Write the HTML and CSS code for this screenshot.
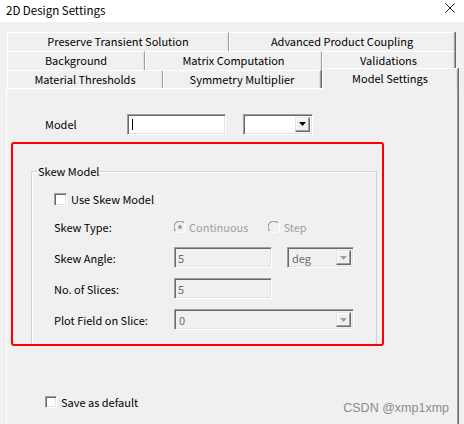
FILE: index.html
```html
<!DOCTYPE html>
<html>
<head>
<meta charset="utf-8">
<link rel="stylesheet" href="styles.css">
</head>
<body>
<div class="titlebar">
  <span class="title">2D Design Settings</span>
  <svg class="close" width="10" height="10" viewBox="0 0 10 10"><path d="M0.5 0.5 L9.5 9.5 M9.5 0.5 L0.5 9.5" stroke="#1a1a1a" stroke-width="1" fill="none"/></svg>
</div>
<div class="dialog">
  <div class="tabs">
    <div class="tabrow">
      <div class="tab w-preserve">Preserve Transient Solution</div>
      <div class="tab w-advanced">Advanced Product Coupling</div>
    </div>
    <div class="tabrow">
      <div class="tab w-background">Background</div>
      <div class="tab w-matrix">Matrix Computation</div>
      <div class="tab w-valid">Validations</div>
    </div>
    <div class="tabrow">
      <div class="tab w-material">Material Thresholds</div>
      <div class="tab w-symmetry">Symmetry Multiplier</div>
      <div class="tab tab-active">Model Settings</div>
    </div>
  </div>
  <div class="panel">
    <div class="model-row">
      <span class="model-label">Model</span>
      <div class="edit edit-model"><span class="caret"></span></div>
      <div class="combo combo-model">
        <span class="combo-text"></span>
        <span class="combo-btn"><svg width="7" height="4" viewBox="0 0 7 4"><path d="M0 0 H7 L3.5 4 Z" fill="#000"/></svg></span>
      </div>
    </div>
    <div class="redbox">
      <div class="group">
        <span class="legend">Skew Model</span>
        <div class="check-row">
          <span class="checkbox"></span>
          <span class="check-label">Use Skew Model</span>
        </div>
        <div class="frow">
          <span class="flabel">Skew Type:</span>
          <span class="radio">
            <svg width="12" height="12" viewBox="0 0 12 12"><path d="M10.2 1.8 A5.5 5.5 0 0 0 1.8 10.2" stroke="#a0a0a0" stroke-width="1.2" fill="none"/><path d="M1.8 10.2 A5.5 5.5 0 0 0 10.2 1.8" stroke="#ffffff" stroke-width="1.2" fill="none"/><circle cx="6" cy="6" r="2" fill="#a0a0a0"/></svg>
            <span class="dis">Continuous</span>
          </span>
          <span class="radio radio-step">
            <svg width="12" height="12" viewBox="0 0 12 12"><path d="M10.2 1.8 A5.5 5.5 0 0 0 1.8 10.2" stroke="#a0a0a0" stroke-width="1.2" fill="none"/><path d="M1.8 10.2 A5.5 5.5 0 0 0 10.2 1.8" stroke="#ffffff" stroke-width="1.2" fill="none"/></svg>
            <span class="dis">Step</span>
          </span>
        </div>
        <div class="frow">
          <span class="flabel">Skew Angle:</span>
          <div class="edit edit-dis w-edit"><span class="dis-val">5</span></div>
          <div class="combo combo-dis combo-deg">
            <span class="combo-text dis-val">deg</span>
            <span class="combo-btn"><svg width="7" height="4" viewBox="0 0 7 4"><path d="M0 0 H7 L3.5 4 Z" fill="#a0a0a0"/></svg></span>
          </div>
        </div>
        <div class="frow">
          <span class="flabel">No. of Slices:</span>
          <div class="edit edit-dis w-edit"><span class="dis-val">5</span></div>
        </div>
        <div class="frow">
          <span class="flabel">Plot Field on Slice:</span>
          <div class="combo combo-dis combo-plot">
            <span class="combo-text dis-val">0</span>
            <span class="combo-btn"><svg width="7" height="4" viewBox="0 0 7 4"><path d="M0 0 H7 L3.5 4 Z" fill="#a0a0a0"/></svg></span>
          </div>
        </div>
      </div>
    </div>
    <div class="save-row">
      <span class="checkbox"></span>
      <span class="check-label">Save as default</span>
    </div>
  </div>
</div>
<div class="watermark">CSDN @xmp1xmp</div>
</body>
</html>
```
FILE: styles.css
```css
* { box-sizing: border-box; }
html, body {
  margin: 0;
  padding: 0;
  width: 464px;
  height: 424px;
  overflow: hidden;
  background: #f0f0f0;
  font-family: "Noto Sans CJK SC", "Noto Sans", sans-serif;
  font-size: 11px;
  color: #000;
}
.titlebar {
  height: 22px;
  background: #ffffff;
  display: flex;
  align-items: center;
  justify-content: space-between;
  padding: 0 9px 3px 6px;
}
.title { font-size: 11.5px; line-height: 14px; }
.close { display: block; margin-top: -3px; }

.dialog { padding-top: 10px; position: relative; }

.tabs { display: flex; flex-direction: column; margin-left: 7px; }
.tabrow { display: flex; height: 19px; }
.tab {
  height: 19px;
  background: #f0f0f0;
  border-top: 1px solid #ffffff;
  border-left: 1px solid #ffffff;
  border-right: 1px solid #a0a0a0;
  box-shadow: inset -1px 0 0 #e3e3e3, 1px 0 0 #696969;
  text-align: center;
  line-height: 17px;
  white-space: nowrap;
}
.w-preserve { width: 222px; }
.w-advanced { width: 226px; }
.w-background { width: 138px; }
.w-matrix { width: 177px; }
.w-valid { width: 133px; }
.w-material { width: 156px; }
.w-symmetry { width: 158px; }
.tab-active {
  width: 136px;
  height: 22px;
  margin-top: -2px;
  margin-left: 1px;
  position: relative;
  z-index: 2;
  line-height: 18px;
  border-bottom: none;
}

.panel {
  margin-left: 6px;
  width: 452px;
  height: 340px;
  border-top: 1px solid #ffffff;
  border-left: 1px solid #ffffff;
  border-right: 1px solid #a0a0a0;
  box-shadow: 1px 0 0 #696969;
  position: relative;
  z-index: 1;
  margin-top: -1px;
  padding-top: 24px;
}

.model-row { display: flex; align-items: center; height: 22px; }
.model-label { width: 120px; padding-left: 38px; }
.edit {
  height: 21px;
  background: #ffffff;
  border-top: 1px solid #a0a0a0;
  border-left: 1px solid #a0a0a0;
  border-right: 1px solid #ffffff;
  border-bottom: 1px solid #ffffff;
  box-shadow: inset 1px 1px 0 #696969, inset -1px -1px 0 #e3e3e3;
  display: flex;
  align-items: center;
  padding-left: 3px;
}
.edit-model { width: 99px; }
.caret { display: block; width: 1px; height: 11px; background: #000; margin-left: 1px; }
.combo {
  height: 21px;
  background: #ffffff;
  border-top: 1px solid #a0a0a0;
  border-left: 1px solid #a0a0a0;
  border-right: 1px solid #ffffff;
  border-bottom: 1px solid #ffffff;
  box-shadow: inset 1px 1px 0 #696969, inset -1px -1px 0 #e3e3e3;
  display: flex;
  align-items: stretch;
  padding: 2px;
}
.combo-model { width: 70px; margin-left: 17px; }
.combo-text { flex: 1; display: flex; align-items: center; padding-left: 2px; }
.combo-btn {
  width: 15px;
  background: #f0f0f0;
  border-top: 1px solid #e3e3e3;
  border-left: 1px solid #e3e3e3;
  border-right: 1px solid #696969;
  border-bottom: 1px solid #696969;
  box-shadow: inset -1px -1px 0 #a0a0a0, inset 1px 1px 0 #ffffff;
  display: flex;
  align-items: center;
  justify-content: center;
}
.combo-btn svg { display: block; }

.redbox {
  margin-top: 7px;
  margin-left: 4px;
  width: 373px;
  height: 204px;
  border: 2px solid #ff0000;
  border-radius: 3px;
  padding: 27px 0 0 18px;
}
.group {
  width: 346px;
  height: 173px;
  border: 1px solid #d0d0d0;
  border-bottom: none;
  box-shadow: inset 1px 1px 0 #ffffff;
  padding-left: 22px;
}
.legend {
  display: table;
  margin: -8px 0 0 -17px;
  padding: 0 1px;
  line-height: 14px;
  background: #f0f0f0;
}
.check-row, .save-row { display: flex; align-items: center; height: 14px; }
.check-row { margin-top: 14px; }
.checkbox {
  width: 13px;
  height: 13px;
  background: #ffffff;
  border-top: 1px solid #a0a0a0;
  border-left: 1px solid #a0a0a0;
  border-right: 1px solid #ffffff;
  border-bottom: 1px solid #ffffff;
  box-shadow: inset 1px 1px 0 #696969, inset -1px -1px 0 #e3e3e3;
  margin-right: 4px;
}
.check-label { line-height: 14px; }

.frow { display: flex; align-items: center; height: 21px; margin-top: 10px; }
.flabel { width: 120px; }
.radio { display: flex; align-items: center; }
.radio svg { display: block; margin-right: 3px; }
.radio-step { margin-left: 20px; }
.dis { color: #a0a0a0; }
.edit-dis { background: #f0f0f0; }
.w-edit { width: 98px; }
.dis-val { color: #6d6d6d; }
.combo-dis { background: #f0f0f0; }
.combo-dis .combo-btn { background: #f0f0f0; }
.combo-deg { width: 67px; margin-left: 15px; }
.combo-plot { width: 180px; }

.save-row { margin-top: 49px; padding-left: 38px; }
.save-row .checkbox { width: 12px; height: 12px; margin-right: 4px; }

.watermark {
  position: absolute;
  right: 15px;
  top: 400px;
  font-family: "Liberation Sans", Arial, sans-serif;
  font-size: 12.5px;
  color: #8c8c8c;
  line-height: 16px;
}
```
